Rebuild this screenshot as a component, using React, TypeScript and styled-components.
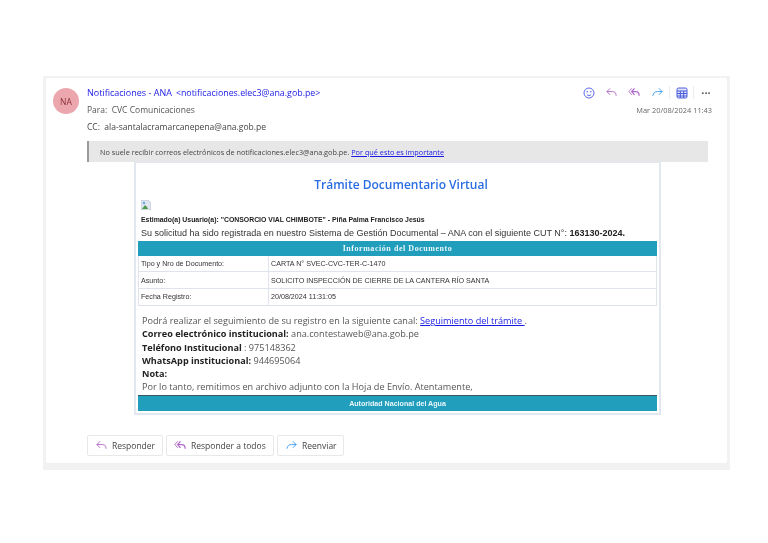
import React from 'react';
import styled, { createGlobalStyle } from 'styled-components';

const Global = createGlobalStyle`
  html, body { margin: 0; padding: 0; background: #fff; }
  body { font-family: "Open Sans", "Noto Sans", sans-serif; color: #333; }
  * { box-sizing: border-box; }
`;

const Page = styled.div`
  width: 768px;
  height: 543px;
  padding: 76px 38px 0 43px;
  overflow: hidden;
`;
const Frame = styled.div`
  background: #f2f2f2;
  padding: 2px 3px 7px 3px;
  height: 394px;
  filter: blur(0.3px);
`;
const Card = styled.div`
  background: #fff;
  height: 385px;
  display: flex;
  flex-direction: column;
  padding: 6px 15px 0 7px;
  border-radius: 2px;
`;
const HeaderRow = styled.div`
  display: flex;
  gap: 8px;
`;
const Avatar = styled.div`
  width: 26px;
  height: 26px;
  border-radius: 50%;
  background: #eba7ad;
  color: #8a2f39;
  font-size: 8.5px;
  display: flex;
  align-items: center;
  justify-content: center;
  margin-top: 4px;
  flex: none;
`;
const HeaderMain = styled.div`
  flex: 1;
  display: flex;
  flex-direction: column;
`;
const TopLine = styled.div`
  display: flex;
  justify-content: space-between;
  align-items: center;
  height: 17px;
`;
const Sender = styled.div`
  font-size: 9px;
  color: #1a1ae6;
  white-space: pre;
`;
const Address = styled.span`
  margin-left: 4px;
  font-size: 8.85px;
`;
const Actions = styled.div`
  display: flex;
  align-items: center;
  margin-right: -6px;
  color: #555;
`;
const ActionSlot = styled.span`
  width: 23px;
  display: flex;
  justify-content: center;
  align-items: center;
`;
const MoreSlot = styled(ActionSlot)`
  width: 24px;
  font-size: 11px;
  font-weight: 700;
`;
const Divider = styled.span`
  width: 1px;
  height: 13px;
  background: #ececec;
`;
const MetaLine = styled.div`
  display: flex;
  justify-content: space-between;
  align-items: center;
  height: 17px;
  font-size: 8.5px;
  color: #555;
  white-space: pre;
`;
const DateText = styled.span`
  font-size: 7.4px;
  color: #666;
`;
const CcLine = styled(MetaLine)`
  color: #444;
`;
const Notice = styled.div`
  margin: 6px 0 0 34px;
  height: 21px;
  width: 621px;
  background: #e7e7e7;
  border-left: 2px solid #9a9a9a;
  padding-left: 11px;
  display: flex;
  align-items: center;
  font-size: 7.3px;
  color: #444;
  white-space: pre;
`;
const NoticeLink = styled.a`
  color: #1a1ae6;
  text-decoration: underline;
`;
const MailBox = styled.div`
  margin-left: 81px;
  width: 527px;
  height: 253px;
  border: 2px solid #e2e7f0;
  border-top-width: 1px;
  padding: 0 2px;
  display: flex;
  flex-direction: column;
  font-family: "Liberation Sans", Arial, sans-serif;
`;
const Title = styled.div`
  text-align: center;
  font-family: "Open Sans", sans-serif;
  font-size: 12px;
  font-weight: 600;
  color: #2a6de2;
  height: 22px;
  line-height: 22px;
  margin-top: 11px;
  padding-left: 7px;
`;
const BrokenImg = styled.svg`
  display: block;
  margin: 4px 0 0 3px;
  flex: none;
`;
const Greeting = styled.div`
  margin-top: 5px;
  font-size: 6.9px;
  font-weight: 700;
  color: #222;
  height: 10px;
  line-height: 10px;
  padding-left: 3px;
  white-space: pre;
`;
const Intro = styled.div`
  margin-top: 2px;
  font-size: 9.03px;
  color: #333;
  height: 13px;
  line-height: 13px;
  padding-left: 3px;
  white-space: pre;
  b { color: #222; }
`;
const DataTable = styled.div`
  margin-top: 1px;
  width: 519px;
  border: 1px solid #dfe4ec;
  border-top: 0;
`;
const TableHead = styled.div`
  height: 15px;
  margin: 0 -1px;
  background: #219ebc;
  color: #e9f6fa;
  font-family: "Liberation Serif", serif;
  font-weight: 700;
  font-size: 8px;
  letter-spacing: 0.55px;
  display: flex;
  align-items: center;
  justify-content: center;
`;
const TableRow = styled.div`
  display: grid;
  grid-template-columns: 129px 1fr;
  height: 16.4px;
  border-bottom: 1px solid #dfe4ec;
  &:last-child { border-bottom: 0; }
`;
const Cell = styled.div`
  font-size: 7.15px;
  color: #333;
  padding: 1px 0 0 2px;
  display: flex;
  align-items: center;
  white-space: pre;
  & + & { border-left: 1px solid #dfe4ec; }
`;
const Details = styled.div`
  margin-top: 8px;
  font-family: "Open Sans", sans-serif;
  font-size: 9.15px;
  line-height: 13.2px;
  color: #555;
  padding-left: 4px;
  white-space: pre;
  b { color: #222; font-weight: 700; }
  a { color: #1a1ae6; text-decoration: underline; }
`;
const FooterBar = styled.div`
  margin-top: 2px;
  width: 519px;
  height: 16px;
  background: #219ebc;
  border-top: 1px solid #3a5a63;
  color: #e9f6fa;
  font-size: 7.1px;
  font-weight: 700;
  display: flex;
  align-items: center;
  justify-content: center;
`;
const ButtonRow = styled.div`
  margin: 20px 0 0 34px;
  display: flex;
  gap: 3px;
`;
const ReplyButton = styled.button<{ $w: number }>`
  width: ${p => p.$w}px;
  height: 21px;
  background: #fff;
  border: 1px solid #e8e8e8;
  border-radius: 2px;
  padding: 0 0 0 7px;
  display: flex;
  align-items: center;
  gap: 4px;
  font-family: "Open Sans", sans-serif;
  font-size: 8.5px;
  color: #444;
  white-space: pre;
`;

const ReplyIcon = ({ color = '#b06cc8', size = 13 }: { color?: string; size?: number }) => (
  <svg width={size} height={size} viewBox="0 0 14 14" fill="none" stroke={color} strokeWidth="1">
    <path d="M5.5 2.5 2 6l3.5 3.5" />
    <path d="M2 6h6c2.500 0 4 1.500 4 4.500" />
  </svg>
);
const ReplyAllIcon = ({ size = 13 }: { size?: number }) => (
  <svg width={size} height={size} viewBox="0 0 14 14" fill="none" stroke="#b06cc8" strokeWidth="1">
    <path d="M4 2.500 1 6l3 3.500" />
    <path d="M7 2.500 4 6l3 3.500" strokeWidth="1.400" />
    <path d="M4 6h4.500c2.200 0 3.500 1.500 3.500 4.500" strokeWidth="1.400" />
  </svg>
);
const ForwardIcon = ({ size = 13 }: { size?: number }) => (
  <svg width={size} height={size} viewBox="0 0 14 14" fill="none" stroke="#3f9cf0" strokeWidth="1">
    <path d="M8.500 2.500 12 6 8.500 9.500" />
    <path d="M12 6H7c-2.800 0-4.500 1.500-5 4.500" />
  </svg>
);
const SmileIcon = () => (
  <svg width="12" height="12" viewBox="0 0 12 12" fill="none" stroke="#4a5ae8" strokeWidth="0.9">
    <circle cx="6" cy="6" r="5" />
    <path d="M3.800 7.400c.6.8 1.300 1.100 2.200 1.100s1.600-.3 2.200-1.100" />
    <circle cx="4.200" cy="4.800" r=".4" />
    <circle cx="7.800" cy="4.800" r=".4" />
  </svg>
);
const CalendarIcon = () => (
  <svg width="12" height="12" viewBox="0 0 12 12" fill="none" stroke="#3c4fd8" strokeWidth="0.9">
    <rect x="1" y="1" width="10" height="10" rx="1.500" fill="#dfe4fb" />
    <path d="M1 4h10M1 6.500h10M1 9h10M4.300 4v7M7.700 4v7" />
  </svg>
);
const BrokenImage = () => (
  <BrokenImg width="10" height="10" viewBox="0 0 10 10">
    <path d="M0 0h7l3 3v7H0z" fill="#dfe6f0" stroke="#aab4c4" strokeWidth=".6" />
    <path d="M1 9l3-4 2 2 1 2z" fill="#4f9a4a" />
    <circle cx="3" cy="3" r="1.300" fill="#6fa4e6" />
  </BrokenImg>
);

const rows = [
  ['Tipo y Nro de Documento:', 'CARTA N° SVEC-CVC-TER-C-1470'],
  ['Asunto:', 'SOLICITO INSPECCIÓN DE CIERRE DE LA CANTERA RÍO SANTA'],
  ['Fecha Registro:', '20/08/2024 11:31:05'],
];

export default function App() {
  return (
    <Page>
      <Global />
      <Frame>
        <Card>
          <HeaderRow>
            <Avatar>NA</Avatar>
            <HeaderMain>
              <TopLine>
                <Sender>Notificaciones - ANA<Address>&lt;notificaciones.elec3@ana.gob.pe&gt;</Address></Sender>
                <Actions>
                  <ActionSlot><SmileIcon /></ActionSlot>
                  <ActionSlot><ReplyIcon /></ActionSlot>
                  <ActionSlot><ReplyAllIcon /></ActionSlot>
                  <ActionSlot><ForwardIcon /></ActionSlot>
                  <Divider />
                  <ActionSlot><CalendarIcon /></ActionSlot>
                  <Divider />
                  <MoreSlot>···</MoreSlot>
                </Actions>
              </TopLine>
              <MetaLine>
                <span>Para:  CVC Comunicaciones</span>
                <DateText>Mar 20/08/2024 11:43</DateText>
              </MetaLine>
              <CcLine>
                <span>CC:  ala-santalacramarcanepena@ana.gob.pe</span>
              </CcLine>
            </HeaderMain>
          </HeaderRow>
          <Notice>
            <span>No suele recibir correos electrónicos de notificaciones.elec3@ana.gob.pe. </span>
            <NoticeLink>Por qué esto es importante</NoticeLink>
          </Notice>
          <MailBox>
            <Title>Trámite Documentario Virtual</Title>
            <BrokenImage />
            <Greeting>Estimado(a) Usuario(a): "CONSORCIO VIAL CHIMBOTE" - Piña Palma Francisco Jesús</Greeting>
            <Intro>
              Su solicitud ha sido registrada en nuestro Sistema de Gestión Documental – ANA con el siguiente CUT N°: <b>163130-2024.</b>
            </Intro>
            <DataTable>
              <TableHead>Información del Documento</TableHead>
              {rows.map(([label, value]) => (
                <TableRow key={label}>
                  <Cell>{label}</Cell>
                  <Cell>{value}</Cell>
                </TableRow>
              ))}
            </DataTable>
            <Details>
              <div>Podrá realizar el seguimiento de su registro en la siguiente canal: <a>Seguimiento del trámite </a>.</div>
              <div><b>Correo electrónico institucional:</b> ana.contestaweb@ana.gob.pe</div>
              <div><b>Teléfono Institucional</b> : 975148362</div>
              <div><b>WhatsApp institucional:</b> 944695064</div>
              <div><b>Nota:</b></div>
              <div>Por lo tanto, remitimos en archivo adjunto con la Hoja de Envío. Atentamente,</div>
            </Details>
            <FooterBar>Autoridad Nacional del Agua</FooterBar>
          </MailBox>
          <ButtonRow>
            <ReplyButton $w={76}><ReplyIcon />Responder</ReplyButton>
            <ReplyButton $w={108}><ReplyAllIcon />Responder a todos</ReplyButton>
            <ReplyButton $w={67}><ForwardIcon />Reenviar</ReplyButton>
          </ButtonRow>
        </Card>
      </Frame>
    </Page>
  );
}
